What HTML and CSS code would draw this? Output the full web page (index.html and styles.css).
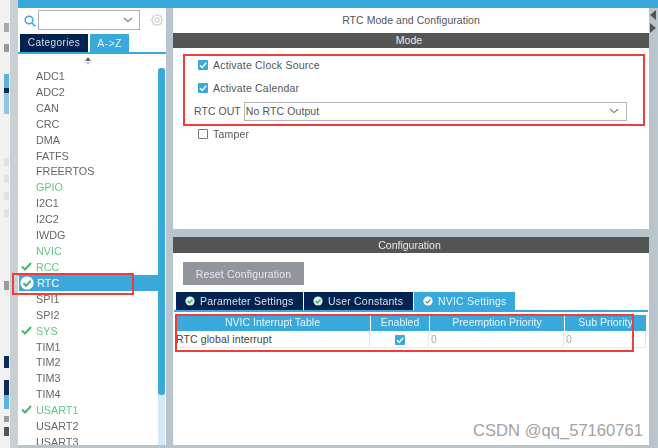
FILE: index.html
```html
<!DOCTYPE html>
<html lang="en">
<head>
<meta charset="utf-8">
<title>RTC Mode and Configuration</title>
<link rel="stylesheet" href="styles.css">
</head>
<body>
<div class="screen">
  <aside class="strip">
    <div class="sb sb-frag sb-f0"></div>
    <div class="sb sb-frag sb-f1"></div>
    <div class="sb sb-blue sb-b0"></div>
    <div class="sb sb-navy sb-n1"></div>
    <div class="sb sb-sky"></div>
    <div class="sb sb-frag sb-faint sb-c2"></div>
    <div class="sb sb-frag sb-faint sb-c"></div>
    <div class="sb sb-frag sb-faint sb-c"></div>
    <div class="sb sb-frag sb-faint sb-c"></div>
    <div class="sb sb-frag sb-c3"></div>
    <div class="sb sb-navy sb-n2"></div>
    <div class="sb sb-navy sb-n3"></div>
    <div class="sb sb-blue"></div>
    <div class="sb sb-frag sb-c4"></div>
    <div class="sb sb-dark"></div>
  </aside>
  <div class="app">
    <header class="topbar"><span class="top-a">Software Packs</span><span class="top-b">Pinout</span></header>
    <div class="work">
      <section class="left">
        <div class="search">
          <svg class="ic-search" viewBox="0 0 12 12"><circle cx="5" cy="5" r="3.8"/><path d="M8 8l3.4 3.4"/></svg>
          <div class="combo"><svg class="chev" viewBox="0 0 10 6"><path d="M1 1l4 3.6L9 1"/></svg></div>
          <svg class="ic-gear" viewBox="0 0 14 14"><circle cx="7" cy="7" r="5" /><circle cx="7" cy="7" r="2.2"/><path d="M7 .6v2M7 11.4v2M.6 7h2M11.4 7h2M2.5 2.5l1.4 1.4M10.1 10.1l1.4 1.4M11.5 2.5l-1.4 1.4M3.9 10.1l-1.4 1.4"/></svg>
        </div>
        <div class="ltabs"><div class="ltab">Categories</div><div class="ltab on">A-&gt;Z</div></div>
        <div class="listwrap">
          <div class="list">
            <div class="sorter"><span class="up"></span><span class="down"></span></div>
            <div class="it">ADC1</div>
            <div class="it">ADC2</div>
            <div class="it">CAN</div>
            <div class="it">CRC</div>
            <div class="it">DMA</div>
            <div class="it">FATFS</div>
            <div class="it">FREERTOS</div>
            <div class="it grn">GPIO</div>
            <div class="it">I2C1</div>
            <div class="it">I2C2</div>
            <div class="it">IWDG</div>
            <div class="it grn">NVIC</div>
            <div class="it grn"><svg class="tick" viewBox="0 0 11 9"><path d="M1 4.5l3 3L10 1"/></svg>RCC</div>
            <div class="it sel"><svg class="seltick" viewBox="0 0 14 14"><circle cx="7" cy="7" r="6.6"/><path d="M3.4 7.2l2.6 2.6 4.8-5"/></svg>RTC</div>
            <div class="it">SPI1</div>
            <div class="it">SPI2</div>
            <div class="it grn"><svg class="tick" viewBox="0 0 11 9"><path d="M1 4.5l3 3L10 1"/></svg>SYS</div>
            <div class="it">TIM1</div>
            <div class="it">TIM2</div>
            <div class="it">TIM3</div>
            <div class="it">TIM4</div>
            <div class="it grn"><svg class="tick" viewBox="0 0 11 9"><path d="M1 4.5l3 3L10 1"/></svg>USART1</div>
            <div class="it">USART2</div>
            <div class="it">USART3</div>
          </div>
          <div class="track"><div class="thumb"></div></div>
        </div>
      </section>
      <main class="right">
        <div class="pane pane-mode">
          <div class="title">RTC Mode and Configuration</div>
          <div class="bar">Mode</div>
          <div class="mode-body">
            <label class="chk"><span class="box on"><svg viewBox="0 0 10 10"><path d="M2 5.2l2.2 2.2L8.2 2.8"/></svg></span>Activate Clock Source</label>
            <label class="chk"><span class="box on"><svg viewBox="0 0 10 10"><path d="M2 5.2l2.2 2.2L8.2 2.8"/></svg></span>Activate Calendar</label>
            <div class="rtcout"><span>RTC OUT</span><div class="select">No RTC Output<svg class="chev" viewBox="0 0 10 6"><path d="M1 1l4 3.6L9 1"/></svg></div></div>
            <label class="chk chk-t"><span class="box"></span>Tamper</label>
          </div>
        </div>
        <div class="pane pane-conf">
          <div class="bar bar-conf">Configuration</div>
          <button class="reset">Reset Configuration</button>
          <div class="ctabs">
            <div class="ctab t1"><svg class="dot" viewBox="0 0 10 10"><circle cx="5" cy="5" r="4.6"/><path d="M2.7 5.1l1.7 1.7 3-3.2"/></svg>Parameter Settings</div>
            <div class="ctab t2"><svg class="dot" viewBox="0 0 10 10"><circle cx="5" cy="5" r="4.6"/><path d="M2.7 5.1l1.7 1.7 3-3.2"/></svg>User Constants</div>
            <div class="ctab t3 on"><svg class="dot" viewBox="0 0 10 10"><circle cx="5" cy="5" r="4.6"/><path d="M2.7 5.1l1.7 1.7 3-3.2"/></svg>NVIC Settings</div>
          </div>
          <div class="tbl">
            <div class="th c1">NVIC Interrupt Table</div>
            <div class="th c2">Enabled</div>
            <div class="th c3">Preemption Priority</div>
            <div class="th c4">Sub Priority</div>
            <div class="td c1 name">RTC global interrupt</div>
            <div class="td c2 mid"><span class="box on"><svg viewBox="0 0 10 10"><path d="M2 5.2l2.2 2.2L8.2 2.8"/></svg></span></div>
            <div class="td c3 zero">0</div>
            <div class="td c4 zero">0</div>
          </div>
        </div>
      </main>
      <aside class="gutter">
        <svg class="arr" viewBox="0 0 6 10"><path d="M6 0v10L0 5z"/></svg>
        <svg class="arr" viewBox="0 0 6 10"><path d="M0 0v10l6-5z"/></svg>
      </aside>
    </div>
  </div>
</div>
<div class="red r1"></div>
<div class="red r2"></div>
<div class="red r3"></div>
<div class="mark">CSDN @qq_57160761</div>
</body>
</html>
```
FILE: styles.css
```css
* { box-sizing: border-box; }
html, body { margin: 0; padding: 0; }
body {
  position: relative;
  width: 658px;
  height: 448px;
  overflow: hidden;
  background: #b9c5cc;
  font-family: "Liberation Sans", Arial, sans-serif;
  font-size: 10.5px;
  color: #555;
}
.screen { display: flex; height: 448px; filter: blur(0.35px); }

/* left sliver of the window behind */
.strip {
  flex: 0 0 18px;
  background: #f1f1f1;
  border-right: 8px solid #c9d0d4;
  display: flex;
  flex-direction: column;
  overflow: hidden;
}
.sb { margin-left: 4px; width: 5px; flex: none; }
.sb-frag { background: #9a9a9a; height: 7px; }
.sb-faint { background: #e2e2e2; height: 8px; margin-top: 9px; }
.sb-f0 { margin-top: 23px; height: 9px; background: #aaa; }
.sb-f1 { margin-top: 12px; height: 8px; }
.sb-b0 { margin-top: 22px; height: 9px; }
.sb-n1 { height: 5px; background: #1f4f7f; }
.sb-sky { height: 21px; background: #8fc6e6; }
.sb-c2 { margin-top: 44px; }
.sb-c3 { margin-top: 64px; height: 9px; }
.sb-navy { background: #0b2a55; }
.sb-n2 { margin-top: 66px; height: 12px; }
.sb-n3 { margin-top: 12px; height: 15px; }
.sb-blue { height: 14px; background: #5cb3e0; }
.sb-c4 { margin-top: 7px; height: 6px; }
.sb-dark { margin-top: 5px; height: 9px; background: #555; }

.app { flex: 1; display: flex; flex-direction: column; min-width: 0; }
.topbar {
  flex: 0 0 8px;
  background: #39a9dc;
  overflow: hidden;
  display: flex;
  color: #dff0f9;
  font-size: 12.5px;
  letter-spacing: .35px;
  line-height: 14px;
  padding-left: 230px;
}
.top-a, .top-b { margin-top: -11px; }
.top-b { margin-left: 122px; }

.work { flex: 1; display: flex; min-height: 0; padding-bottom: 3px; }

/* left panel */
.left {
  flex: 0 0 148px;
  background: #fff;
  display: flex;
  flex-direction: column;
  min-height: 0;
  margin-right: 7px;
}
.search { flex: 0 0 26px; display: flex; align-items: flex-start; padding: 2px 0 0 6px; }
.ic-search { width: 12px; height: 12px; margin: 5px 2px 0 0; fill: none; stroke: #39a9dc; stroke-width: 1.5; }
.combo {
  width: 102px; height: 20px; border: 1px solid #aeb2b4; background: #fff;
  display: flex; align-items: center; justify-content: flex-end; padding-right: 6px;
}
.chev { width: 10px; height: 6px; fill: none; stroke: #777; stroke-width: 1.1; }
.ic-gear { width: 14px; height: 14px; margin: 3px 0 0 10px; fill: none; stroke: #d2d2d2; stroke-width: 1.2; }
.ltabs { flex: 0 0 20px; display: flex; padding-left: 2px; gap: 2px; border-bottom: 2px solid #39a9dc; }
.ltab {
  width: 68px; background: #002352; color: #d7dde6; text-align: center;
  font-size: 10px; letter-spacing: .4px; line-height: 18px;
}
.ltab.on { width: 39px; background: #39a9dc; color: #e6f4fb; font-size: 10.5px; }
.listwrap { flex: 1; display: flex; min-height: 0; overflow: hidden; padding-right: 1px; }
.list { flex: 1; min-width: 0; }
.sorter { height: 14px; display: flex; flex-direction: column; align-items: center; padding: 3px 0 0 0; gap: 1px; }
.up, .down { width: 0; height: 0; border-left: 3px solid transparent; border-right: 3px solid transparent; }
.up { border-bottom: 4px solid #666; }
.down { border-top: 3px solid #ccc; }
.it {
  height: 15.92px; line-height: 16.9px; padding-left: 18px; position: relative;
  font-size: 10.8px; color: #666;
}
.it.grn { color: #62c68a; }
.tick {
  width: 11px; height: 9px; position: absolute; left: 3px; top: 3px;
  fill: none; stroke: #45b56f; stroke-width: 2;
}
.it.sel { background: #39a9dc; color: #fff; margin-left: 1px; padding-left: 18px; height: 16px; line-height: 16px; }
.seltick { width: 14px; height: 14px; position: absolute; left: 1px; top: 1px; }
.seltick circle { fill: #fff; }
.seltick path { fill: none; stroke: #45b56f; stroke-width: 2; }
.track { flex: 0 0 7px; margin-top: 14px; background: #d6e8f5; }
.thumb { height: 327px; background: #39a9dc; border-radius: 3px; }

/* right */
.right { flex: 0 0 476px; display: flex; flex-direction: column; gap: 8px; min-height: 0; }
.pane { background: #fff; }
.pane-mode { flex: 0 0 221px; }
.pane-conf { flex: 1; min-height: 0; }
.title { height: 24px; line-height: 24px; text-align: center; letter-spacing: .05px; color: #555; }
.bar {
  margin-top: 1px; height: 15px; line-height: 15px; background: #545654; color: #e8e8e8;
  text-align: center; padding-right: 4px;
}
.bar-conf { margin-top: 0; height: 16px; line-height: 16px; padding-right: 3px; }
.mode-body { display: flex; flex-direction: column; padding: 7px 0 0 21px; }
.chk { display: flex; align-items: center; height: 20px; margin-bottom: 3px; padding-left: 4px; letter-spacing: .2px; color: #555; }
.box {
  width: 10px; height: 10px; flex: none; margin-right: 5px; border: 1px solid #777; background: #fff; border-radius: 1px;
  display: flex;
}
.box.on { border: 0; background: #39a9dc; }
.box svg { width: 10px; height: 10px; fill: none; stroke: #fff; stroke-width: 1.4; }
.rtcout { display: flex; align-items: center; height: 20px; gap: 3px; letter-spacing: .05px; }
.select {
  width: 383px; height: 19px; border: 1px solid #b5b8ba; display: flex; align-items: center;
  justify-content: space-between; padding: 0 7px 0 1px; letter-spacing: .1px;
}
.chk-t { margin-top: 3px; }
.reset {
  display: block; margin: 9px 0 0 10px; width: 121px; height: 23px; border: 0; background: #90969b; color: #e4e6e8;
  font: 10.5px "Liberation Sans", Arial, sans-serif; letter-spacing: .15px;
}
.ctabs { display: flex; margin: 7px 1px 0 1px; padding-left: 2px; height: 20px; border-bottom: 2px solid #39a9dc; }
.ctab {
  background: #002352; color: #d9e0e8; display: flex; align-items: center; letter-spacing: .2px;
  padding-left: 9px; height: 18px; margin-right: 1px;
}
.t1 { width: 127px; }
.t2 { width: 109px; }
.t3 { width: 101px; }
.ctab.on { background: #39a9dc; color: #e8f5fb; }
.dot { width: 10px; height: 10px; margin-right: 5px; flex: none; }
.dot circle { fill: #d8f0e0; }
.dot path { fill: none; stroke: #2f9e63; stroke-width: 1.2; }
.ctab.on .dot circle { fill: #fff; }
.tbl {
  display: grid; grid-template-columns: 195px 58px 134px 81px;
  grid-template-rows: 16px 16px; column-gap: 1px; row-gap: 1px;
  margin: 3px 0 0 2px;
}
.th { background: #39a9dc; color: #e6f4fb; text-align: center; line-height: 15px; white-space: nowrap; overflow: hidden; }
.td { border-bottom: 1px solid #e4e6e8; line-height: 15px; background: #fff; border-right: 1px solid #e4e6e8; }
.name { padding-left: 1px; letter-spacing: .1px; color: #444; }
.mid { display: flex; justify-content: center; align-items: center; padding-left: 5px; }
.zero { color: #aaa; padding-left: 1px; }

.gutter { flex: 1; display: flex; flex-direction: column; gap: 3px; padding: 2px 0 0 1px; }
.arr { width: 6px; height: 10px; fill: #555; }

/* annotations drawn over the screenshot */
.red { position: absolute; border: 2px solid #f23c3c; pointer-events: none; }
.r1 { left: 12px; top: 273px; width: 122px; height: 22px; }
.r2 { left: 183px; top: 54px; width: 462px; height: 72px; }
.r3 { left: 175px; top: 314px; width: 459px; height: 38px; }
.mark {
  position: absolute; right: 15px; top: 421px;
  font-size: 16.6px; line-height: 19px; color: #a2a2a2; background: #fff; padding: 0 0 0 2px;
}
```
